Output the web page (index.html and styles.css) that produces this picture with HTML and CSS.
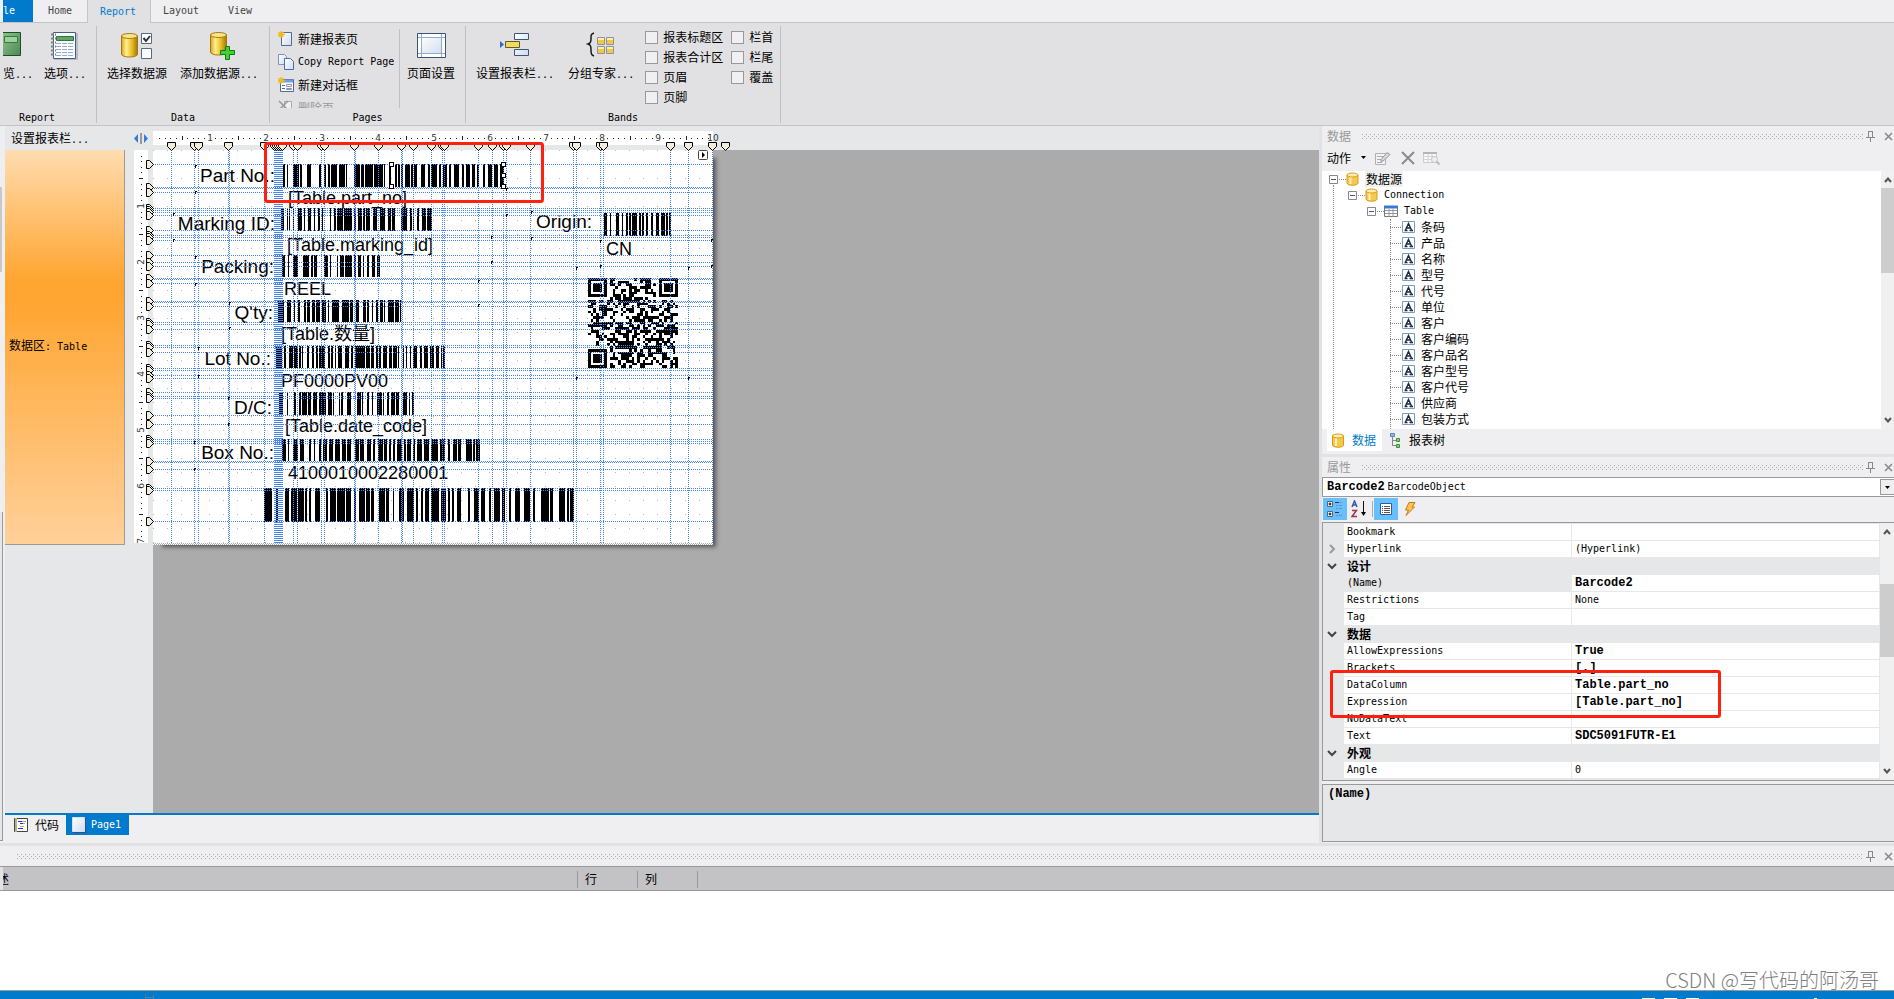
FILE: index.html
```html
<!DOCTYPE html>
<html lang="zh-CN">
<head>
<meta charset="utf-8">
<title>Report Designer</title>
<link rel="stylesheet" href="styles.css">
</head>
<body>
<nav class="tabs">
  <button class="tab file">le</button>
  <button class="tab">Home</button>
  <button class="tab current">Report</button>
  <button class="tab">Layout</button>
  <button class="tab">View</button>
</nav>

<section class="ribbon">
  <div class="group g-report">
    <div class="tools">
      <button class="big b-preview">
        <svg width="24" height="32"><defs><linearGradient id="green" x2="1" y2="1"><stop stop-color="#8dc08d"/><stop offset="1" stop-color="#4b8a51"/></linearGradient></defs><path d="M0 3h17v23H0z" fill="url(#green)"/><path d="M0 2.500h17.500v23H0" fill="none" stroke="#1e4d28"/><path d="M1.500 6.500h13v6h-13z" fill="#9fcf9b" stroke="#2e7d3a"/></svg>
        <span>览<i>...</i></span>
      </button>
      <button class="big b-options">
        <svg width="32" height="32"><path d="M5 3h24v27H5z" fill="#b9bdc8"/><path d="M4.500 2.500h22v26h-22z" fill="#fbfcff" stroke="#3f6184"/><path d="M7.500 6.500h17v4h-17z" fill="#65a366" stroke="#2d7a3a"/><path d="M7 13.500h18M7 16.500h18M7 19.500h18M7 22.500h18M7 25.500h18" stroke="#9aa9c6" stroke-dasharray="5 1"/><path d="M2 4.500h5M2 8.500h5M2 12.500h5M2 16.500h5M2 20.500h5M2 24.500h5" stroke="#7b7f88" stroke-width="2" stroke-dasharray="3 1"/></svg>
        <span>选项<i>...</i></span>
      </button>
    </div>
    <h2>Report</h2>
  </div>
  <div class="group g-data">
    <div class="tools">
      <button class="big">
        <svg width="32" height="32"><defs><linearGradient id="gold"><stop stop-color="#d9a520"/><stop offset=".3" stop-color="#fff08c"/><stop offset=".65" stop-color="#e8bd28"/><stop offset="1" stop-color="#a67605"/></linearGradient></defs><path d="M.5 6v18c0 4 16 4 16 0V6z" fill="url(#gold)" stroke="#a5780e"/><ellipse cx="8.500" cy="6" rx="8" ry="2.500" fill="#f8e58a" stroke="#a5780e"/><path d="M20.500 3.500h10v10h-10zM20.500 18.500h10v10h-10z" fill="#fff" stroke="#53698a"/><path d="M22.500 8l2.500 3 4-5" fill="none" stroke="#333" stroke-width="2"/></svg>
        <span>选择数据源</span>
      </button>
      <button class="big">
        <svg width="32" height="32"><path d="M7.500 5v17c0 4 16 4 16 0V5z" fill="url(#gold)" stroke="#a5780e"/><ellipse cx="15.500" cy="5" rx="8" ry="2.500" fill="#f8e58a" stroke="#a5780e"/><path d="M22.500 16.500h4v4h5v4h-5v5h-4v-5h-5v-4h5z" fill="#43d032" stroke="#137a18"/></svg>
        <span>添加数据源<i>...</i></span>
      </button>
    </div>
    <h2>Data</h2>
  </div>
  <div class="group g-pages">
    <div class="tools">
      <div class="list">
        <button><svg width="16" height="16"><defs><linearGradient id="sheet" x2="1" y2="1"><stop stop-color="#fff"/><stop offset="1" stop-color="#cfdcf0"/></linearGradient></defs><path d="M3.500 1.500h10v13h-10z" fill="url(#sheet)" stroke="#4e6b9a"/><path d="M3 0v7M0 3.500h7M.5 1l5 5M5.500 1l-5 5" stroke="#f0bc1c" stroke-width="1.300"/></svg>新建报表页</button>
        <button><svg width="16" height="16"><path d="M.5.500h6l2 2v8h-8z" fill="url(#sheet)" stroke="#7c93ba"/><path d="M6.500 4.500h6l3 3v8h-9z" fill="url(#sheet)" stroke="#4e6b9a"/></svg><i>Copy Report Page</i></button>
        <button><svg width="16" height="16"><path d="M2.500 2.500h13v12h-13z" fill="#f7faff" stroke="#4e6b9a"/><path d="M3 4h12" stroke="#6fa0e8" stroke-width="3"/><path d="M4 8.500h3M4 11.500h3" stroke="#4e6b9a"/><path d="M8.500 7.500h5v2h-5zM8.500 11.500h5v1h-5z" fill="none" stroke="#8d98a8"/><path d="M3 0v7M0 3.500h7M.5 1l5 5M5.500 1l-5 5" stroke="#f0bc1c" stroke-width="1.300"/></svg>新建对话框</button>
        <button class="off" disabled><svg width="16" height="16"><path d="M6.500 1.500h7v13h-7z" fill="#efefef" stroke="#aaa"/><path d="M1 1l9 9M10 1l-9 9" stroke="#999" stroke-width="1.500"/></svg>删除页</button>
      </div>
      <button class="big setup">
        <svg width="32" height="32"><path d="M2.500 3.500h28v24h-28z" fill="#fff" stroke="#3a5573"/><path d="M6 7h21v17H6z" fill="url(#sheet)"/><path d="M3 7.500h27M3 23.500h27M6.500 4v23M26.500 4v23" stroke="#93abc8"/></svg>
        <span>页面设置</span>
      </button>
    </div>
    <h2>Pages</h2>
  </div>
  <div class="group g-bands">
    <div class="tools">
      <button class="big">
        <svg width="32" height="32"><path d="M15.500 3.500h14v6h-14zM15.500 19.500h14v6h-14z" fill="url(#sheet)" stroke="#3c5678"/><path d="M6.500 11.500h14v6h-14z" fill="#f3da5c" stroke="#5d5a38"/><path d="M1 11l4 3.500-4 3.500z" fill="#2f66d0"/></svg>
        <span>设置报表栏<i>...</i></span>
      </button>
      <button class="big">
        <svg width="32" height="32"><path d="M9 3c-3 1-3 2-3 5s0 5-3 6c3 1 3 3 3 6s0 5 3 6" fill="none" stroke="#1b1b1b" stroke-width="1.500"/><path d="M12.500 7.500h7v7h-7zM21.500 7.500h7v7h-7zM12.500 16.500h7v7h-7zM21.500 16.500h7v7h-7z" fill="#f2c744" stroke="#8a93a5"/><path d="M13 9h6M22 9h6M13 18h6M22 18h6" stroke="#fff0a0" stroke-width="2"/></svg>
        <span>分组专家<i>...</i></span>
      </button>
      <div class="checks">
        <label><input type="checkbox">报表标题区</label>
        <label><input type="checkbox">报表合计区</label>
        <label><input type="checkbox">页眉</label>
        <label><input type="checkbox">页脚</label>
      </div>
      <div class="checks">
        <label><input type="checkbox">栏首</label>
        <label><input type="checkbox">栏尾</label>
        <label><input type="checkbox">覆盖</label>
      </div>
    </div>
    <h2>Bands</h2>
  </div>
</section>

<main class="main">
  <div class="edge"><div class="edge-thumb"></div><div class="edge-box"></div></div>
  <section class="designer">
    <div class="surface">
      <aside class="bands">
        <button class="config">设置报表栏<i>...</i></button>
        <div class="band"><span>数据区<i>: Table</i></span></div>
      </aside>
      <div class="workspace"><svg id="page" width="601" height="426" viewBox="134 126 601 426"></svg></div>
    </div>
    <div class="pagetabs">
      <button><svg width="14" height="14"><path d="M.5.500h13v13H.5z" fill="#fffef0" stroke="#444"/><path d="M2 0v14" stroke="#b5b08c" stroke-width="2"/><path d="M4 3.500h4M6 5.500h3M4 10.500h5" stroke="#1c32e0"/><path d="M8 3.500h4M9 5.500h2M6 8.500h4" stroke="#aaa"/></svg>代码</button>
      <button class="current"><svg width="14" height="16"><path d="M.5.500h12v14H.5z" fill="url(#sheet)" stroke="#d5e2f5"/><path d="M13.500 1v14.500H1" fill="none" stroke="#3a4d80"/></svg><i>Page1</i></button>
    </div>
  </section>

  <aside class="side">
    <section class="data">
      <header class="caption"><h3>数据</h3><span class="grip"></span>
        <button aria-label="Pin"><svg width="9" height="11"><path d="M2.500 0v6M6.500 0v6M2 .5h5M0 6.500h9M4.500 7v4" stroke="#888" fill="none"/></svg></button>
        <button aria-label="Close"><svg width="9" height="9"><path d="M1 1l7 7M8 1L1 8" stroke="#888" stroke-width="1.500"/></svg></button></header>
      <div class="toolbar">
        <button class="action">动作<svg width="5" height="3"><path d="M0 0h5L2.500 3z"/></svg></button>
        <button aria-label="Edit"><svg width="16" height="14"><path d="M.5 2.500h10v11H.5z" fill="#f4f4f4" stroke="#b0b0b0"/><path d="M2 5.500h6M2 8.500h4M2 11.500h5" stroke="#aaa"/><path d="M6 8.500l6-7 3 2-6 6-3 1z" fill="#d8d8d8" stroke="#999"/></svg></button>
        <button aria-label="Delete"><svg width="14" height="14"><path d="M1 1l12 12M13 1L1 13" stroke="#8c8c8c" stroke-width="2"/></svg></button>
        <button aria-label="View data"><svg width="17" height="14"><path d="M.5 1.500h13v10H.5z" fill="#f7f7f7" stroke="#ccc"/><path d="M0 2h14" stroke="#b5b5b5" stroke-width="2"/><path d="M1 5.500h12M1 8.500h12M5 3v8M9 3v8" stroke="#d4d4d4"/><circle cx="11.500" cy="8.500" r="3" fill="#eee" stroke="#c8c8c8"/><path d="M13.500 10.500l3 3" stroke="#bbb" stroke-width="2"/></svg></button>
      </div>
      <div class="scrollrow">
        <div class="tree" id="tree"></div>
        <div class="scroll s1"><svg width="8" height="6"><path d="M1 5l3-3.500L7 5" fill="none" stroke="#555" stroke-width="2"/></svg><span></span><svg class="down" width="8" height="6"><path d="M1 1l3 3.500L7 1" fill="none" stroke="#555" stroke-width="2"/></svg></div>
      </div>
      <div class="sidetabs">
        <button class="current"><svg width="12" height="15"><path d="M.5 3v9c0 3 11 3 11 0V3z" fill="#f7c84b" stroke="#d79a1a"/><path d="M4 5v8" stroke="#fff3c0" stroke-width="2"/><ellipse cx="6" cy="3" rx="5.500" ry="2" fill="#ffeeb0" stroke="#d79a1a"/></svg>数据</button>
        <button><svg width="12" height="15"><path d="M2.500 4v9M2 7.500h4M2 12.500h4" stroke="#888"/><path d="M.5.500h4v3h-4z" fill="#8fb4ee" stroke="#5c83c8"/><path d="M6.500 5.500h3v3h-3zM6.500 11.500h3v3h-3z" fill="#7fd06a" stroke="#3a953a"/></svg>报表树</button>
      </div>
    </section>
    <section class="props">
      <header class="caption"><h3>属性</h3><span class="grip"></span>
        <button aria-label="Pin"><svg width="9" height="11"><path d="M2.500 0v6M6.500 0v6M2 .5h5M0 6.500h9M4.500 7v4" stroke="#888" fill="none"/></svg></button>
        <button aria-label="Close"><svg width="9" height="9"><path d="M1 1l7 7M8 1L1 8" stroke="#888" stroke-width="1.500"/></svg></button></header>
      <div class="object"><label for="object">Barcode2</label><select id="object"><option>BarcodeObject</option></select><span class="drop"><svg width="5" height="3"><path d="M0 0h5L2.500 3z"/></svg></span></div>
      <div class="propbar">
        <button class="on" aria-label="Categorized"><svg width="16" height="18"><path d="M.5 1.500h5v5h-5zM.5 11.500h5v5h-5z" fill="#fff" stroke="#567"/><path d="M1.500 4h3M3 2.500v3M1.500 14h3M3 12.500v3" stroke="#000"/><path d="M8 2.500h4M8 12.500h4" stroke="#335"/><path d="M9 5.500h2m1 0h3M9 8.500h2m1 0h3M9 15.500h2m1 0h3M13 2.500h2" stroke="#7a8fa8"/></svg></button>
        <button class="az" aria-label="Alphabetical"><svg width="16" height="18"><path d="M1 7l2.500-6L6 7M2 5h3" fill="none" stroke="#3a56a8" stroke-width="1.500"/><path d="M1 10.500h4.500L1 16.500h5" fill="none" stroke="#9c3a44" stroke-width="1.500"/><path d="M12.500 1v13" stroke="#111"/><path d="M10 12l2.500 4 2.500-4z"/></svg></button>
        <span class="bar"></span>
        <button class="on" aria-label="Properties"><svg width="14" height="14"><path d="M1.500 1.500h11v11h-11z" fill="#fff" stroke="#39598c"/><path d="M3 4.500h1m1 0h6M3 6.500h1m1 0h6M3 8.500h1m1 0h6M3 10.500h1m1 0h6" stroke="#555"/></svg></button>
        <button class="bolt" aria-label="Events"><svg width="12" height="14"><path d="M5 .5h6L8 5h2.500L2 13.500 4.500 8h-3z" fill="#ffc44d" stroke="#c4791a"/></svg></button>
      </div>
      <div class="scrollrow gridbox">
        <table class="grid" id="grid"><colgroup><col class="c0"><col class="c1"><col></colgroup><tbody></tbody></table>
        <div class="scroll s2"><svg width="8" height="6"><path d="M1 5l3-3.500L7 5" fill="none" stroke="#555" stroke-width="2"/></svg><span></span><svg class="down" width="8" height="6"><path d="M1 1l3 3.500L7 1" fill="none" stroke="#555" stroke-width="2"/></svg></div>
      </div>
      <div class="mark"></div>
      <div class="desc">(Name)</div>
    </section>
  </aside>
</main>

<section class="output">
  <header class="caption"><span class="grip"></span>
    <button aria-label="Pin"><svg width="9" height="11"><path d="M2.500 0v6M6.500 0v6M2 .5h5M0 6.500h9M4.500 7v4" stroke="#888" fill="none"/></svg></button>
    <button aria-label="Close"><svg width="9" height="9"><path d="M1 1l7 7M8 1L1 8" stroke="#888" stroke-width="1.500"/></svg></button></header>
  <table class="messages"><thead><tr><th class="m0"><span>述</span></th><th class="m1">行</th><th class="m1">列</th><th></th></tr></thead></table>
  <div class="watermark">CSDN @写代码的阿汤哥</div>
</section>
<footer class="status">
  <svg width="16" height="8"><path d="M.5 4v4M8.500 4v4M1 6.500h7" stroke="#6a7680" fill="none"/></svg>
  <svg width="252" height="8"><path d="M0 7h13v1H0zM22 7h13v1H22zM44 7h13v1H44zM172 7h3v1h-3z" fill="#fff"/></svg>
</footer>
<script src="designer.js"></script>
</body>
</html>
```
FILE: styles.css
```css
* { box-sizing: border-box; }
body {
  margin: 0; min-height: 100vh; display: flex; flex-direction: column;
  background: #efeff1; color: #000; overflow: hidden;
  font: 12px/16px "Noto Sans CJK SC", sans-serif;
}
button { border: 0; padding: 0; margin: 0; background: none; color: inherit; font: inherit; text-align: left; }
h2, h3 { margin: 0; font: inherit; }
svg { display: block; flex: none; }
i, .tab, .group h2, .grid, .object { font: 10px/16px "DejaVu Sans Mono", "Noto Sans CJK SC", monospace; }

.tabs { display: flex; height: 23px; padding-left: 3px; border-bottom: 1px solid #c4c4c8; background: #efeff1; }
.tab { height: 22px; padding: 0 15px; color: #444; line-height: 20px; }
.tab.file { width: 30px; padding: 0; background: #007acc; color: #fff; }
.tab:nth-child(2) { width: 54px; }
.tab.current { width: 64px; height: 23px; padding: 0 12px; color: #007acc; background: #e1e1e3; border: solid #c4c4c8; border-width: 0 1px; }
.tab:nth-child(4) { padding-left: 12px; width: 62px; }

.ribbon { display: flex; height: 103px; padding: 3px 0; background: #e1e1e3; border-bottom: 1px solid #c4c4c8; }
.group { display: flex; flex-direction: column; border-right: 1px solid #c0c0c4; height: 97px; }
.group h2 { text-align: center; padding-top: 2px; }
.tools { display: flex; height: 82px; flex: none; padding-top: 3px; align-items: flex-start; overflow: hidden; }
.big { display: flex; flex-direction: column; align-items: center; gap: 3px; flex: none; white-space: nowrap; }
.big svg { margin-top: 1px; }
.g-report { width: 97px; }
.g-report h2 { padding-right: 22px; }
.g-report .tools { padding-left: 3px; gap: 17px; }
.b-preview { align-items: flex-start; width: 24px; }
.g-data { width: 173px; }
.g-data .tools { padding-left: 10px; gap: 13px; }
.g-pages { width: 196px; }
.list { display: flex; flex-direction: column; gap: 7px; width: 130px; height: 79px; padding: 2px 0 0 8px; border-right: 1px solid #c0c0c4; overflow: hidden; }
.list button { display: flex; align-items: center; gap: 4px; height: 16px; flex: none; white-space: nowrap; }
.list .off { color: #999; }
.setup { margin-left: 7px; }
.g-bands { width: 315px; }
.g-bands .tools { padding-left: 10px; gap: 14px; }
.checks { display: flex; flex-direction: column; gap: 4px; margin-left: -3px; flex: none; }
.checks label { display: flex; align-items: center; gap: 5px; height: 16px; white-space: nowrap; }
.checks input { appearance: none; width: 13px; height: 13px; margin: 0; border: 1px solid #999; background: #f0f0f2; }
.checks + .checks { margin-left: -6px; }

.main { display: flex; flex: 1; }
.edge { width: 5px; background: #efeff1; padding-top: 61px; display: flex; flex-direction: column; }
.edge-thumb { width: 2px; height: 85px; background: #c8c8ca; }
.edge-box { width: 3px; flex: 1; margin: 240px 0 2px; background: #e6e7e9; border: solid #999; border-width: 0 1px 1px 0; }
.designer { flex: 1; display: flex; flex-direction: column; min-width: 0; }
.surface { flex: 1; display: flex; background: #e6e7e9; border-bottom: 2px solid #007acc; }
.bands { width: 129px; padding-top: 4px; }
.config { display: block; height: 16px; margin: 0 0 4px 6px; }
.band {
  width: 120px; height: 395px; padding: 0 4px 2px; display: flex; align-items: center;
  border: solid #a09a94; border-width: 0 1px 1px 0;
  background: linear-gradient(#ffdcb0, #ffa531 33%, #ffa531 38%, #ffd09a);
}
.workspace { flex: 1; background: linear-gradient(#ababab, #ababab) 19px 24px no-repeat; }
#page text { font-family: "Liberation Sans", "Noto Sans CJK SC", sans-serif; font-size: 18px; }
#page text.label { font-size: 19px; text-anchor: end; }
#page text.num { font-family: "DejaVu Sans", sans-serif; font-size: 9px; text-anchor: middle; fill: #333; }
.pagetabs { display: flex; height: 28px; background: #efeff1; }
.pagetabs button { display: flex; align-items: center; gap: 7px; height: 20px; padding: 0 7px 1px 9px; }
.pagetabs .current { gap: 5px; width: 63px; padding: 0 6px; background: #007acc; color: #fff; }

.side { width: 575px; flex: none; display: flex; flex-direction: column; border-left: 3px solid #e1e2e4; background: #efeff1; }
.data { border-bottom: 3px solid #e1e2e4; height: 331px; }
.caption { display: flex; align-items: center; height: 20px; padding: 0 1px 0 5px; color: #999; }
.caption h3 { width: 35px; }
.grip {
  flex: 1; height: 5px; margin-right: 3px;
  background-image:
    linear-gradient(90deg, #aaa 1px, transparent 1px),
    linear-gradient(90deg, transparent 2px, #aaa 2px, #aaa 3px, transparent 3px),
    linear-gradient(90deg, #aaa 1px, transparent 1px);
  background-size: 4px 1px; background-position: 0 0, 0 2px, 0 4px; background-repeat: repeat-x;
}
.caption button + button { margin-left: 9px; }
.toolbar { display: flex; align-items: center; gap: 9px; height: 25px; padding: 0 0 2px 5px; }
.action { display: flex; align-items: center; gap: 10px; }
.toolbar button + button { margin-right: 1px; }
.toolbar button + button + button + button { margin-left: -2px; }
.scrollrow { display: flex; height: 258px; overflow: hidden; }
.tree { flex: 1; background: #fff; position: relative; }
.row { display: flex; align-items: center; height: 16px; white-space: nowrap; }
.row svg + span, .row svg + i { margin-left: 6px; }
.row .root { background: #f0f0f0; padding: 0 1px; }
.row.l1 { padding-left: 7px; } .row.l2 { padding-left: 26px; } .row.l3 { padding-left: 45px; } .row.l4 { padding-left: 68px; }
.stem { position: absolute; left: 11px; top: 14px; bottom: 0; border-left: 1px dotted #888; }
.stem.inner { left: 68px; top: 48px; }
.scroll { width: 13px; background: #f0f0f0; display: flex; flex-direction: column; align-items: center; padding: 6px 0; }
.scroll span { width: 13px; background: #cdcdcd; }
.scroll .down { margin-top: auto; }
.s1 span { margin-top: 5px; height: 85px; }
.s2 { width: 14px; }
.s2 span { width: 14px; margin-top: 49px; height: 73px; }
.sidetabs { display: flex; height: 22px; padding-left: 5px; }
.sidetabs button { display: flex; align-items: center; gap: 7px; padding: 0 5px; height: 22px; }
.sidetabs button + button { margin-left: 3px; }
.sidetabs .current { width: 55px; background: #fff; color: #007acc; gap: 8px; }
.props { flex: 1; display: flex; flex-direction: column; position: relative; padding-bottom: 1px; background: #efeff1; }
.object { display: flex; align-items: center; height: 20px; padding-left: 4px; border: solid #999; border-width: 1px 0 1px 1px; background: #fff; }
.object label, .grid b, .desc { font: bold 12px/16px "Liberation Mono", monospace; }
.object select { flex: 1; appearance: none; border: 0; padding: 0; margin-left: 3px; background: none; font: inherit; }
.drop { display: grid; place-items: center; width: 14px; height: 16px; border: solid #999; border-width: 1px 0 1px 1px; background: #efeff1; }
.propbar { display: flex; align-items: center; height: 24px; margin-bottom: 1px; padding-left: 1px; }
.propbar button { display: grid; place-items: center; width: 24px; height: 22px; }
.propbar .on { background: #66bfff; }
.propbar .bar { width: 1px; height: 16px; margin: 0 1px; background: #aaa; }
.gridbox { height: 259px; border: solid #999; border-width: 1px 0 1px 1px; background: #e6e7e9; }
.grid { flex: 1; width: 100%; table-layout: fixed; border-collapse: separate; border-spacing: 0; margin-top: 1px; background: #e6e7e9; align-self: flex-start; }
.c0 { width: 21px; } .c1 { width: 228px; }
.grid td { height: 17px; padding: 0 0 0 3px; border-bottom: 1px solid #e6e7e9; border-right: 1px solid #e6e7e9; background: #fff; white-space: nowrap; }
.grid td:first-child, .grid .cat td, .grid .sel td:nth-child(2) { background: #e6e7e9; }
.grid .cat td:nth-child(2) { font: bold 12px/16px "Noto Sans CJK SC", sans-serif; }
.desc { flex: 1; margin-top: 3px; padding: 1px 5px; background: #e6e7e9; border: solid #999; border-width: 1px 0 1px 1px; }
.mark { position: absolute; left: 8px; top: 213px; width: 391px; height: 48px; border: 3px solid #ff2010; border-radius: 3px; }

.output { border-top: 3px solid #e1e2e4; position: relative; height: 148px; background: #fff; border-bottom: 1px solid #999; }
.output .caption { background: #efeff1; padding-left: 17px; }
.messages { width: 100%; table-layout: fixed; border-collapse: separate; border-spacing: 0; background: #c3c3c6; border: solid #999; border-width: 1px 0; }
.messages th { height: 23px; padding: 0 0 0 7px; font-weight: 400; text-align: left; overflow: hidden; background: linear-gradient(#999, #999) 100% 4px / 1px 17px no-repeat; }
.messages th:last-child { background: none; }
.messages .m0 { width: 578px; padding: 0; border-left: 3px solid #e1e2e4; }
.m0 span { margin-left: -6px; }
.m1 { width: 60px; }
.watermark { position: absolute; right: 15px; bottom: -3px; font-size: 20px; line-height: 26px; font-weight: 300; color: #808080; }
.status { display: flex; justify-content: space-between; height: 8px; padding-left: 145px; background: #007acc; }
```
FILE: designer.js
```js
const out = [];
const rect = (x, y, w, h, f, extra = '') => out.push(`<rect x="${x}" y="${y}" width="${w}" height="${h}" fill="${f}" ${extra}/>`);

// Page sheet, shadow and rulers
out.push('<defs><pattern id="dots" x="181" y="178" width="14" height="14" patternUnits="userSpaceOnUse"><rect width="1" height="1" fill="#b8b8b8"/></pattern><pattern id="dither" width="2" height="2" patternUnits="userSpaceOnUse"><path d="M0 0h1v1H0zM1 1h1v1H1z" fill="#aaa"/></pattern><filter id="sh"><feGaussianBlur stdDeviation="2"/></filter></defs>');
rect(162, 158, 554, 389, '#555', 'filter="url(#sh)"');
rect(134, 126, 601, 24, '#e6e7e9');
rect(153, 131, 560, 14, '#fff');
rect(134, 150, 14, 393, '#fff');
rect(148, 150, 5, 402, '#e6e7e9');
rect(153, 150, 560, 395, '#fff');
rect(153, 150, 560, 393, 'url(#dots)');
rect(153, 543, 560, 2, 'url(#dither)');

for (let i = 1; i < 100; i++) {
  const p = Math.round(153.5 + i * 5.6);
  if (i % 10) rect(p, i % 5 ? 138 : 136, 1, i % 5 ? 1 : 4, '#222');
  else out.push(`<text class="num" x="${p}" y="141">${i / 10}</text>`);
}
out.push('<text class="num" x="713" y="141">10</text>');
for (let i = 1; i < 70; i++) {
  const p = Math.round(150 + i * 5.6);
  if (i % 10) rect(i % 5 ? 141 : 139, p, i % 5 ? 1 : 4, 1, '#222');
  else out.push(`<text class="num" transform="translate(144 ${p}) rotate(-90)">${i / 10}</text>`);
}
out.push('<text class="num" transform="translate(144 541) rotate(-90)">7</text>');

// Barcodes: bar edges in thirds of a pixel from an origin
function bars(y, h, origin, s) {
  s.trim().split(/\s+/).forEach(p => {
    const [a, b] = p.split('-').map(Number);
    const x = Math.round(origin + a / 3);
    rect(x, y, Math.max(1, Math.round((b - a + 1) / 3)), h, '#000');
  });
}
bars(164, 23, 0, '848-852 862-865 880-897 901-905 921-932 958-962 972-976 984-990 993-1000 1003-1012 1016-1032 1037-1040 1061-1078 1082-1090 1094-1104 1108-1118 1122-1138');
bars(164, 23, 380, '0-8 12-15 27-33 45-49 53-57 64-70 75-88 92-97 101-110 123-135 145-149 154-172 178-182 189-200 208-212 222-236 245-249 258-268 275-282 291-297 310-316 325-335 343-355 360-370');
bars(208, 23, 0, '842-850 860-863 868-870 879-882 893-905 912-915 925-932 943-946 955-960 967-970 990-993 1003-1007 1012-1028 1033-1055 1062-1066 1073-1085 1090-1094 1099-1111 1118-1130');
bars(208, 23, 380, '0-15 23-30 36-44 62-78 90-94 98-101 110-115 127-137 142-146 148-155');
bars(255, 22, 0, '845-852 864-867 880-893 908-924 932-936 943-951 972-984 990-993 1010-1013 1021-1031 1036-1055 1062-1067 1075-1084 1090-1093 1102-1107 1115-1124 1130-1138');
bars(300, 22, 0, '835-852 862-873 881-884 894-900 913-918 922-931 937-944 949-960 965-976 985-988 996-1017 1025-1045 1050-1057 1068-1075 1090-1098 1102-1106 1115-1118 1127-1132');
bars(300, 22, 380, '0-8 12-15 24-40 45-55 60-63');
bars(346, 22, 120, '468-484 491-495 507-518 522-533 538-542 547-550 561-565 577-583 588-592 598-615 623-627 634-640 645-648 655-667 674-685 692-698 705-735 738-748 753-762 767-772 778-783 790-800 806-815 820-830 835-838 850-853 858-861 870-873 880-892 900-905 912-922 930-942 948-957 963-966 970-975');
bars(392, 23, 120, '478-490 500-503 522-527 537-541 546-560 565-573 578-590 597-618 623-634 640-643 656-659 663-668 680-692 710-722 727-730 742-747 755-758 770-783 790-793 800-805 813-824 828-837 850-861 866-869 876-880');
bars(439, 22, 120, '487-497 505-508 518-531 541-552 568-573 583-586 596-600 608-618 628-638 645-658 665-675 682-694 704-714 720-732 740-750 760-764 774-787 792-800 806-812 820-824 830-845 852-856 862-874 880-884 890-905 912-925 932-938 944-952');
bars(439, 22, 430, '10-20 30-45 53-59 68-78 84-93 108-125 128-133 137-147');
bars(213, 23, 380, '672-680 690-693 708-715 726-729 738-742 748-752 757-770 776-781 786-791 797-803 812-817 828-835 843-854 858-862 867-872');
bars(488, 34, 120, '433-457 469-474 495-507 512-528 534-552 556-560 567-573 584-597 617-623 629-645 650-672 677-690 703-707 716-732 738-748 753-760 777-793 799-808 819-821 838-851 860-880 887-892 904-910 915-925');
bars(488, 34, 430, '3-27 34-47 54-58 66-71 81-93 114-119 132-145 153-165 177-182 192-210 217-224 238-242 255-270 282-300 310-315 333-355 360-369 387-405 410-414 420-431');

// QR symbol, 33 x 33 modules
let seed = 41;
const rnd = () => (seed = (seed * 16807) % 2147483647) / 2147483647;
const n = 33, edge = k => Math.round(k * 90 / n);
const finder = (r, c) => {
  for (const [a, b] of [[0, 0], [0, n - 7], [n - 7, 0]]) {
    const y = r - a, x = c - b;
    if (y >= -1 && y <= 7 && x >= -1 && x <= 7) {
      if (y < 0 || y > 6 || x < 0 || x > 6) return 0;
      return y % 6 === 0 || x % 6 === 0 || (y > 1 && y < 5 && x > 1 && x < 5) ? 1 : 0;
    }
  }
  return -1;
};
for (let r = 0; r < n; r++) for (let c = 0; c < n; c++) {
  const f = finder(r, c), on = f < 0 ? rnd() < .5 : f;
  if (on) rect(588 + edge(c), 278 + edge(r), edge(c + 1) - edge(c), edge(r + 1) - edge(r), '#000');
}

// Object captions
[['Part No.:', 275, 182], ['Marking ID:', 275, 230], ['Packing:', 274, 273], ["Q'ty:", 273, 319], ['Lot No.:', 271, 365], ['D/C:', 272, 414], ['Box No.:', 274, 459], ['Origin:', 592, 228]]
  .forEach(([t, x, y]) => out.push(`<text class="label" x="${x}" y="${y}">${t}</text>`));
[['[Table.part_no]', 288, 204], ['[Table.marking_id]', 287, 251], ['REEL', 284, 295], ['[Table.数量]', 281, 340], ['PF0000PV00', 281, 387], ['[Table.date_code]', 285, 432], ['4100010002280001', 288, 479], ['CN', 606, 255]]
  .forEach(([t, x, y]) => out.push(`<text x="${x}" y="${y}">${t}</text>`));

// Guides and their ruler markers
const vx = [171, 194, 198, 228, 264, 274, 276, 278, 280, 282, 293, 297, 321, 324, 354, 378, 401, 413, 431, 442, 444, 478, 492, 503, 506, 530, 573, 576, 600, 603, 670, 688, 712];
const hy = [164, 187, 192, 208, 210, 212, 215, 230, 235, 237, 240, 255, 262, 266, 278, 283, 301, 306, 322, 324, 329, 345, 347, 352, 368, 370, 375, 378, 392, 396, 398, 415, 424, 439, 441, 443, 461, 469, 488, 490, 521];
const line = (d, w = 1) => out.push(`<path d="${d}" stroke="#4a86ea" stroke-width="${w}" stroke-dasharray="1 1" shape-rendering="crispEdges"/>`);
vx.filter(x => x < 274 || x > 282).forEach(x => line(`M${x + .5} 150V543`));
line('M278.5 150V543', 9);
[228, 354, 401].forEach(x => line(`M${x + 1.5} 151V543`));
hy.forEach(y => line(`M153 ${y + .5}H713`));
[187, 278, 301, 461].forEach(y => line(`M154 ${y + 1.5}H713`));
[...vx, 725].forEach(x => out.push(`<path d="M${x - 3.5} 142.500h8v4l-4 4-4-4z" fill="#f0eddc" stroke="#000"/>`));
hy.forEach(y => out.push(`<path d="M146.500 ${y - 3.5}h3l4 4-4 4h-3z" fill="#f0eddc" stroke="#000"/>`));

// Object corner marks
[[195, 165], [195, 191], [173, 213], [173, 239], [195, 256], [195, 283], [229, 302], [229, 327], [198, 347], [198, 375], [228, 397], [228, 423], [194, 441], [194, 468], [506, 214], [506, 188], [491, 236], [491, 261], [531, 211], [531, 237], [600, 240], [600, 265], [711, 239], [711, 265], [576, 267], [688, 267], [576, 377], [688, 377], [478, 280], [478, 304]]
  .forEach(([x, y]) => out.push(`<path d="M${x} ${y}h2v1h-1v2h-1z"/>`));

// Selection handles, page menu button and callout
[[389, 162], [389, 184], [501, 162], [501, 173], [501, 184]].forEach(([x, y]) => rect(x + .5, y + .5, 4, 4, '#fff', 'stroke="#000"'));
rect(698.5, 150.5, 9, 9, '#fff', 'stroke="#444" rx="1"');
out.push('<path d="M702 152v6l3-3z"/>');
rect(265.5, 143.5, 277, 58, 'none', 'stroke="#ff2010" stroke-width="3" rx="2"');
// Resize arrows beside the ruler
out.push('<path d="M138 134v9l-4-4.500zM144 134v9l4-4.500z" fill="#3c78d8"/><path d="M140 133h2v11h-2z" fill="#999"/>');
document.getElementById('page').innerHTML = out.join('');

// Data tree
const box = w => `<svg width="${w}" height="16"><path d="M.5 4.500h8v8h-8z" fill="#fff" stroke="#888"/><path d="M2 8.500h5" stroke="#345a9c"/><path d="M10 8.500h${w - 10}" stroke="#888" stroke-dasharray="1 1"/></svg>`;
const db = '<svg width="13" height="16"><path d="M1 4v8c0 3 11 3 11 0V4z" fill="#f7c84b" stroke="#d79a1a"/><path d="M4.500 6v7" stroke="#fff3c0" stroke-width="2"/><ellipse cx="6.500" cy="4" rx="5.500" ry="2" fill="#ffeeb0" stroke="#d79a1a"/></svg>';
const tbl = '<svg width="14" height="16"><path d="M.5 3.500h13v10H.5z" fill="#fff" stroke="#777"/><path d="M0 4h14" stroke="#3b78d8" stroke-width="3"/><path d="M1 7.500h12M1 10.500h12M5 6v8M9 6v8" stroke="#999"/></svg>';
const fld = '<svg width="25" height="16"><path d="M0 8.500h11" stroke="#888" stroke-dasharray="1 1"/><path d="M12.500 2.500h12v11h-12z" fill="#fff" stroke="#7c9cc4"/><path d="M15.500 11l3-6.500 3 6.500M17 9h3M14.500 11.500h3M19.500 11.500h3.500" fill="none" stroke="#1c2b44" stroke-width="1.400"/></svg>';
document.getElementById('tree').innerHTML =
  `<span class="stem"></span><span class="stem inner"></span>
  <div class="row l1">${box(17)}${db}<span class="root">数据源</span></div>
  <div class="row l2">${box(17)}${db}<i>Connection</i></div>
  <div class="row l3">${box(17)}${tbl}<i>Table</i></div>` +
  '条码 产品 名称 型号 代号 单位 客户 客户编码 客户品名 客户型号 客户代号 供应商 包装方式'.split(' ')
    .map(t => `<div class="row l4">${fld}<span>${t}</span></div>`).join('');

// Property grid
const arrow = (d, c) => `<svg width="13" height="10"><path d="${d}" fill="none" stroke="${c}" stroke-width="2"/></svg>`;
const rows = [['Bookmark', ''], ['Hyperlink', '(Hyperlink)', 'more'], ['设计'], ['(Name)', '<b>Barcode2</b>', 'sel'], ['Restrictions', 'None'], ['Tag', ''], ['数据'], ['AllowExpressions', '<b>True</b>'], ['Brackets', '<b>[,]</b>'], ['DataColumn', '<b>Table.part_no</b>'], ['Expression', '<b>[Table.part_no]</b>'], ['NoDataText', ''], ['Text', '<b>SDC5091FUTR-E1</b>'], ['外观'], ['Angle', '0']];
document.querySelector('#grid tbody').innerHTML = rows.map(([a, b, c]) => b === undefined
  ? `<tr class="cat"><td>${arrow('M2 3l4 4 4-4', '#444')}</td><td colspan="2">${a}</td></tr>`
  : `<tr class="${c || ''}"><td>${c === 'more' ? arrow('M4 1l4 4-4 4', '#999') : ''}</td><td>${a}</td><td>${b}</td></tr>`).join('');
```
